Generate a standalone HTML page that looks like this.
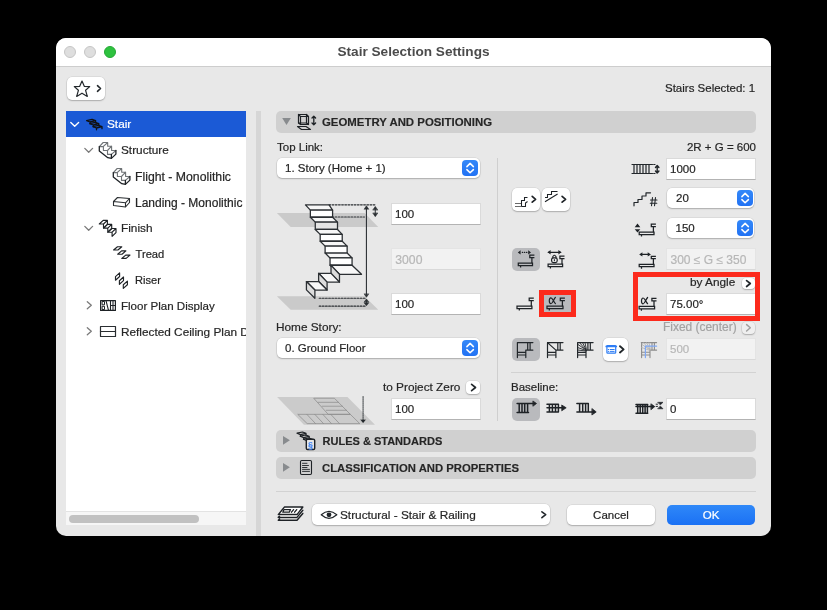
<!DOCTYPE html>
<html><head><meta charset="utf-8">
<style>
*{box-sizing:border-box;margin:0;padding:0}
html,body{width:827px;height:610px;background:#000;overflow:hidden;font-family:"Liberation Sans",sans-serif;font-size:11.5px;color:#262626}
.a{position:absolute}
#win{position:absolute;left:56px;top:38px;width:715px;height:498px;background:#e8e8e8;border-radius:10px;overflow:hidden}
#titlebar{position:absolute;left:56px;top:38px;width:715px;height:29px;background:#fff;border-radius:10px 10px 0 0;border-bottom:1px solid #cdcdcd}
.tl{position:absolute;top:46px;width:12px;height:12px;border-radius:50%;background:#dedede;border:1px solid #c6c6c6}
.t{position:absolute;white-space:nowrap;line-height:1;font-size:11.5px;margin-top:1px;-webkit-text-stroke-width:0.2px}
.tr{font-size:11.8px}
.input{position:absolute;background:#fff;border:1px solid #dadada;border-bottom-color:#b3b3b3;height:22px}
.dis{background:#f2f2f2;border-color:#e4e4e4;border-bottom-color:#d9d9d9}
.popup{position:absolute;background:#fff;border-radius:5px;height:20px;box-shadow:0 0 0 0.5px rgba(0,0,0,.10),0 1px 1.5px rgba(0,0,0,.22)}
.step{position:absolute;width:16px;height:16px;border-radius:4px;background:linear-gradient(#3488f8,#2172f4)}
.sec{position:absolute;left:276px;width:480px;height:22px;background:#d0d0d0;border-radius:5px}
.b{position:absolute;white-space:nowrap;line-height:1;font-size:11.3px;margin-top:1px;-webkit-text-stroke-width:0.15px;font-weight:bold;color:#262626}
.tog{position:absolute;width:28px;height:24px;border-radius:5px;background:#b9babd}
.btn{position:absolute;background:#fff;border-radius:5px;box-shadow:0 0 0 0.5px rgba(0,0,0,.10),0 1px 1.5px rgba(0,0,0,.22)}
.red{position:absolute;border:5px solid #fc2a1c}
.g{color:#a9a9a9}
</style></head><body>
<div id="root" style="position:absolute;left:0;top:0;width:827px;height:610px;will-change:transform">
<div id="win"></div>
<div id="titlebar"></div>
<div class="tl" style="left:64px"></div>
<div class="tl" style="left:84px"></div>
<div class="tl" style="left:104px;background:#2ec23f;border-color:#25a935"></div>
<div class="t" style="left:337.5px;top:44.2px;font-size:13.62px;font-weight:bold;color:#4b4b4b;-webkit-text-stroke-width:0">Stair Selection Settings</div>

<!-- favorites -->
<div class="btn" style="left:67px;top:77px;width:38px;height:23px"></div>
<div class="t" style="left:665px;top:82.3px">Stairs Selected: 1</div>

<!-- tree -->
<div class="a" style="left:66px;top:111px;width:180px;height:414px;background:#fff"></div>
<div class="a" style="left:66px;top:511px;width:180px;height:1px;background:#e3e3e3"></div>
<div class="a" style="left:66px;top:512px;width:180px;height:13px;background:#f6f6f6"></div>
<div class="a" style="left:69px;top:515px;width:130px;height:8px;border-radius:4px;background:#c1c1c1"></div>
<div class="a" style="left:66px;top:111px;width:180px;height:26px;background:#1b5ad6"></div>
<div class="t tr" style="left:107px;top:117.9px;color:#fff">Stair</div>
<div class="t tr" style="left:121px;top:143.9px">Structure</div>
<div class="t tr" style="left:135px;top:169.7px;font-size:12.25px">Flight - Monolithic</div>
<div class="t tr" style="left:135px;top:195.8px;font-size:12px">Landing - Monolithic</div>
<div class="t tr" style="left:121px;top:221.9px">Finish</div>
<div class="t tr" style="left:135.5px;top:248.3px;font-size:11.2px">Tread</div>
<div class="t tr" style="left:135px;top:274.3px;font-size:11.1px">Riser</div>
<div class="t tr" style="left:121px;top:300.1px;font-size:11.55px">Floor Plan Display</div>
<div class="a" style="left:121px;top:320px;width:125px;height:20px;overflow:hidden"><div class="t tr" style="left:0;top:5.9px">Reflected Ceiling Plan Display</div></div>

<!-- splitter -->
<div class="a" style="left:256px;top:111px;width:5px;height:425px;background:#d6d6d6"></div>

<!-- geometry section -->
<div class="sec" style="top:111px"></div>
<div class="b" style="left:322px;top:115.9px;font-size:11.42px">GEOMETRY AND POSITIONING</div>
<div class="t" style="left:277px;top:141.3px">Top Link:</div>
<div class="t" style="left:636px;top:141.4px;width:120px;text-align:right">2R + G = 600</div>
<div class="popup" style="left:277px;top:158px;width:203px"></div>
<div class="step" style="left:462px;top:160px"></div>
<div class="t" style="left:285px;top:162.3px">1. Story (Home + 1)</div>

<div class="input" style="left:391px;top:203px;width:90px"></div>
<div class="t" style="left:395px;top:208.3px">100</div>
<div class="input dis" style="left:391px;top:248px;width:90px"></div>
<div class="t g" style="left:395.3px;top:252.8px;color:#b7b7b7;font-size:12.2px">3000</div>
<div class="input" style="left:391px;top:293px;width:90px"></div>
<div class="t" style="left:395px;top:298.3px">100</div>

<div class="t" style="left:276px;top:321px;font-size:11.8px">Home Story:</div>
<div class="popup" style="left:277px;top:338px;width:203px"></div>
<div class="step" style="left:462px;top:340px"></div>
<div class="t" style="left:285px;top:342.1px">0. Ground Floor</div>

<div class="t" style="left:383px;top:380.8px;font-size:11.8px">to Project Zero</div>
<div class="btn" style="left:466px;top:381px;width:14px;height:13px;border-radius:4px"></div>
<div class="input" style="left:391px;top:398px;width:90px"></div>
<div class="t" style="left:395px;top:403.3px">100</div>

<div class="a" style="left:497px;top:158px;width:1px;height:263px;background:#cfcfcf"></div>

<!-- right column controls -->
<div class="input" style="left:666px;top:158px;width:90px"></div>
<div class="t" style="left:670px;top:163.3px">1000</div>
<div class="popup" style="left:667px;top:188px;width:87px"></div>
<div class="step" style="left:737px;top:190px"></div>
<div class="t" style="left:676px;top:192.3px">20</div>
<div class="popup" style="left:667px;top:218px;width:87px"></div>
<div class="step" style="left:737px;top:220px"></div>
<div class="t" style="left:675.5px;top:222.3px">150</div>
<div class="input dis" style="left:666px;top:248px;width:90px"></div>
<div class="t" style="left:670.5px;top:253px;color:#b7b7b7;font-size:12px">300 ≤ G ≤ 350</div>

<div class="t" style="left:690px;top:275.6px;font-size:11.8px">by Angle</div>
<div class="btn" style="left:742px;top:278px;width:13px;height:11px;border-radius:4px"></div>
<div class="input" style="left:666px;top:293px;width:90px"></div>
<div class="t" style="left:670px;top:298.3px">75.00°</div>
<div class="t" style="left:663px;top:321px;color:#a3a3a3;font-size:11.95px">Fixed (center)</div>
<div class="btn" style="left:742px;top:322px;width:13px;height:12px;border-radius:4px;background:#efefef"></div>
<div class="input dis" style="left:666px;top:338px;width:90px"></div>
<div class="t" style="left:670px;top:343.3px;color:#b7b7b7">500</div>

<div class="btn" style="left:512px;top:188px;width:28px;height:23px"></div>
<div class="btn" style="left:542px;top:188px;width:28px;height:23px"></div>
<div class="tog" style="left:512px;top:248px;width:28px;height:23px"></div>
<div class="tog" style="left:544px;top:295px;width:27px;height:17px;border-radius:0"></div>
<div class="tog" style="left:512px;top:338px;width:28px;height:23px"></div>
<div class="btn" style="left:603px;top:338px;width:25px;height:23px"></div>

<div class="a" style="left:511px;top:372px;width:245px;height:1px;background:#d2d2d2"></div>
<div class="t" style="left:511px;top:381.1px">Baseline:</div>
<div class="tog" style="left:512px;top:398px;width:28px;height:23px"></div>
<div class="input" style="left:666px;top:398px;width:90px"></div>
<div class="t" style="left:670px;top:403.3px">0</div>

<!-- red boxes -->
<div class="red" style="left:539px;top:290px;width:37px;height:27px"></div>
<div class="red" style="left:633px;top:272px;width:127px;height:49px"></div>

<!-- other sections -->
<div class="sec" style="top:430px"></div>
<div class="b" style="left:322.5px;top:435.2px;font-size:11.02px">RULES &amp; STANDARDS</div>
<div class="sec" style="top:457px"></div>
<div class="b" style="left:322px;top:462px">CLASSIFICATION AND PROPERTIES</div>
<div class="a" style="left:276px;top:491px;width:480px;height:1px;background:#d2d2d2"></div>

<!-- bottom bar -->
<div class="btn" style="left:312px;top:504px;width:238px;height:21px"></div>
<div class="t tr" style="left:340px;top:508.9px">Structural - Stair &amp; Railing</div>
<div class="btn" style="left:567px;top:505px;width:88px;height:20px"></div>
<div class="t" style="left:567px;top:508.5px;width:88px;text-align:center">Cancel</div>
<div class="a" style="left:667px;top:505px;width:88px;height:20px;border-radius:5px;background:linear-gradient(#2f88f8,#1b71f4)"></div>
<div class="t" style="left:667px;top:508.5px;width:88px;text-align:center;color:#fff">OK</div>

<!-- ICONS -->
<svg class="a" style="left:0;top:0" width="827" height="610" viewBox="0 0 827 610" fill="none" stroke="#22272b" stroke-linejoin="round" stroke-linecap="round">
 <!-- star -->
 <path d="M82 81 L84.4 86.4 L89.7 86.6 L85.6 90.3 L87.3 96.4 L82 93.2 L76.7 96.4 L78.4 90.3 L74.3 86.6 L79.6 86.4 Z" stroke-width="1.2"/>
 <path d="M97.5 85.7 L100.5 88.5 L97.5 91.3" stroke-width="1.6"/>
 <!-- tree chevrons -->
 <path d="M70.8 122.6 L74.7 126.3 L78.6 122.6" stroke="#fff" stroke-width="1.4"/>
 <path d="M84.8 148.4 L88.7 152.2 L92.6 148.4" stroke="#7a7a7a" stroke-width="1.3"/>
 <path d="M84.8 226.4 L88.7 230.2 L92.6 226.4" stroke="#7a7a7a" stroke-width="1.3"/>
 <path d="M87.3 301.8 L91.3 305.3 L87.3 308.8" stroke="#7a7a7a" stroke-width="1.3"/>
 <path d="M87.3 327.8 L91.3 331.3 L87.3 334.8" stroke="#7a7a7a" stroke-width="1.3"/>
 <!-- stair icon (selected) -->
 <g stroke="#111" stroke-width="1.3">
  <path d="M86.6 120.6 L92.1 119.4 L95.6 120.7 L90.1 122.0 Z M90.1 122.0 L90.1 123.8 M95.6 120.7 L95.6 122.7"/>
  <path d="M89.8 123.6 L95.3 122.4 L98.8 123.7 L93.3 125.0 Z M93.3 125.0 L93.3 126.8 M98.8 123.7 L98.8 125.7"/>
  <path d="M93.0 126.6 L98.5 125.4 L102.0 126.7 L96.5 128.0 Z M96.5 128.0 L96.5 129.8 M102.0 126.7 L102.0 128.7"/>
 </g>
 <!-- structure icon -->
 <path d="M99.3 146.6 L103.2 142.5 L107.7 142.5 L107.7 146.2 L111.6 146.2 L111.6 150.5 L115.9 150.5 L115.9 154.1 L111.4 158.4 L107.8 157.7 L99.3 151.1 Z" fill="#fff" stroke="none"/>
 <path d="M99.3 146.6 L103.2 142.5 L107.7 142.5 L107.7 146.2 L111.6 146.2 L111.6 150.5 L115.9 150.5 M99.3 146.6 L103.4 146.4 L103.4 150.5 L107.5 150.5 L107.5 154.4 L111.4 154.4 M103.4 146.4 L107.7 142.5 M107.5 150.5 L111.6 146.2 M111.4 154.4 L115.9 150.5" stroke="#6f7376" stroke-width="1.1"/>
 <path d="M99.3 146.6 L99.3 151.1 L107.8 157.7 L111.4 158.4 L115.9 154.1 L115.9 150.5 M111.4 154.4 L111.4 158.4" stroke="#1e2226" stroke-width="1.3"/>
 <path d="M113.3 172.6 L117.2 168.5 L121.7 168.5 L121.7 172.2 L125.6 172.2 L125.6 176.5 L129.9 176.5 L129.9 180.1 L125.4 184.4 L121.8 183.7 L113.3 177.1 Z" fill="#fff" stroke="none"/>
 <path d="M113.3 172.6 L117.2 168.5 L121.7 168.5 L121.7 172.2 L125.6 172.2 L125.6 176.5 L129.9 176.5 M113.3 172.6 L117.4 172.4 L117.4 176.5 L121.5 176.5 L121.5 180.4 L125.4 180.4 M117.4 172.4 L121.7 168.5 M121.5 176.5 L125.6 172.2 M125.4 180.4 L129.9 176.5" stroke="#6f7376" stroke-width="1.1"/>
 <path d="M113.3 172.6 L113.3 177.1 L121.8 183.7 L125.4 184.4 L129.9 180.1 L129.9 176.5 M125.4 180.4 L125.4 184.4" stroke="#1e2226" stroke-width="1.3"/>
 <!-- landing icon -->
 <path d="M113.5 201.5 L117.5 197.5 L129.5 198.5 L129.5 202.5 L125.5 207 L113.5 205.5 Z M113.5 201.5 L125.5 202.8 L129.5 198.5 M125.5 202.8 L125.5 207" stroke="#2a2e31" stroke-width="1.1"/>
 <!-- finish icon -->
 <g stroke="#1e2226" stroke-width="1.15">
  <path d="M99.3 224.0 L103.2 220.3 L107.4 220.3 L103.5 224.0 Z M103.5 224.0 L103.5 228.1 L107.4 224.4 L107.4 220.3"/>
  <path d="M103.6 228.1 L107.5 224.4 L111.7 224.4 L107.8 228.1 Z M107.8 228.1 L107.8 232.2 L111.7 228.5 L111.7 224.4"/>
  <path d="M107.9 232.2 L111.8 228.5 L116.0 228.5 L112.1 232.2 Z M112.1 232.2 L112.1 236.3 L116.0 232.6 L116.0 228.5"/>
 </g>
 <!-- tread icon -->
 <g stroke="#1e2226" stroke-width="1.15">
  <path d="M113.6 250.0 L117.5 246.7 L121.8 246.7 L117.9 250.0 Z"/>
  <path d="M117.7 254.2 L121.6 250.9 L125.9 250.9 L122.0 254.2 Z"/>
  <path d="M121.8 258.4 L125.7 255.1 L130.0 255.1 L126.1 258.4 Z"/>
 </g>
 <!-- riser icon -->
 <g stroke="#1e2226" stroke-width="1.15">
  <path d="M115.5 280.2 L115.5 276.6 L119.6 272.9 L119.6 276.5 Z"/>
  <path d="M119.4 284.3 L119.4 280.7 L123.5 277.0 L123.5 280.6 Z"/>
  <path d="M123.3 288.4 L123.3 284.8 L127.4 281.1 L127.4 284.7 Z"/>
 </g>
 <!-- floor plan icon -->
 <g stroke="#1e2226" stroke-width="1.2">
  <rect x="100.6" y="300.6" width="14.8" height="9.8"/>
  <path d="M102.5 301.5 L104.5 301.5 L104.5 304.8 L102.5 304.8 Z M102.5 306.3 L104.5 306.3 L104.5 309.5 L102.5 309.5 Z" stroke-width="1"/>
  <path d="M106 300.6 L108.5 310.4 M110.5 300.6 L110.5 310.4 M113 300.6 L113 310.4 M110.5 305.5 L115.4 305.5" stroke-width="1.1"/>
 </g>
 <!-- rcp icon -->
 <g stroke="#2a2e31" stroke-width="1.2">
  <rect x="100.5" y="326.5" width="15" height="10"/>
  <path d="M100.5 331.5 L115.5 331.5"/>
 </g>

 <!-- section triangles -->
 <path d="M282.2 118.1 L290.9 118.1 L286.5 124.9 Z" fill="#888b8e" stroke="none"/>
 <path d="M283 436 L283 444.7 L289.9 440.3 Z" fill="#888b8e" stroke="none"/>
 <path d="M283 463 L283 471.7 L289.9 467.3 Z" fill="#888b8e" stroke="none"/>
 <!-- geometry icon -->
 <g stroke="#1e2226" stroke-width="1.2">
  <rect x="298.5" y="114.5" width="8" height="8.5"/>
  <path d="M298.5 114.5 L300.5 116.5 L308.5 116.5 L308.5 124.5 L300.5 124.5 L300.5 116.5 M306.5 114.5 L308.5 116.5 M306.5 123 L308.5 124.5 M298.5 123 L300.5 124.5"/>
  <path d="M297.5 126.5 L306 126.5 L310.5 129.5 L301.5 129.5 Z"/>
  <path d="M313.8 116.5 L313.8 124.5 M312 118 L313.8 116.2 L315.6 118 M312 123 L313.8 124.8 L315.6 123" stroke-width="1.3"/>
 </g>
 <!-- rules icon -->
 <g stroke="#1e2226" stroke-width="1.2">
  <path d="M297.0 433.2 L302.5 432.0 L306.0 433.3 L300.5 434.6 Z M300.5 434.6 L300.5 436.4 M306.0 433.3 L306.0 435.3"/>
  <path d="M300.2 436.2 L305.7 435.0 L309.2 436.3 L303.7 437.6 Z M303.7 437.6 L303.7 439.4 M309.2 436.3 L309.2 438.3"/>
  <path d="M303.4 439.2 L308.9 438.0 L312.4 439.3 L306.9 440.6 Z M306.9 440.6 L306.9 442.4 M312.4 439.3 L312.4 441.3"/>
 </g>
  <rect x="306.3" y="439.3" width="8.4" height="10.2" rx="1.3" fill="#e6e6e6" stroke="#1e2226" stroke-width="1.4"/>
  <text x="310.5" y="447.8" font-size="9" font-weight="bold" font-family="Liberation Sans" fill="#3a80f6" stroke="none" text-anchor="middle">§</text>
 <!-- classification icon -->
 <g stroke="#1e2226" stroke-width="1.1">
  <rect x="300.5" y="460.5" width="11" height="14" rx="1.2"/>
  <path d="M302.5 463.3 L307 463.3 M302.5 465.5 L308.5 465.5 M302.5 467.5 L307 467.5 M302.5 469.4 L309.5 469.4 M302.5 471.4 L309.5 471.4" stroke-width="0.9"/>
 </g>

 <!-- popup steppers -->
 <g stroke="#fff" stroke-width="1.5">
  <path d="M466.9 166.6 L470.1 163.4 L473.4 166.6 M466.9 169.6 L470.1 172.8 L473.4 169.6"/>
  <path d="M466.9 346.6 L470.1 343.4 L473.4 346.6 M466.9 349.6 L470.1 352.8 L473.4 349.6"/>
  <path d="M741.9 196.6 L745.1 193.4 L748.4 196.6 M741.9 199.6 L745.1 202.8 L748.4 199.6"/>
  <path d="M741.9 226.6 L745.1 223.4 L748.4 226.6 M741.9 229.6 L745.1 232.8 L748.4 229.6"/>
 </g>
 <!-- small chevron buttons -->
 <path d="M471.6 384.4 L475.5 387.5 L471.6 390.7" stroke-width="1.7"/>
 <path d="M746.6 280.6 L750.3 283.5 L746.6 286.5" stroke-width="1.7"/>
 <path d="M746.6 324.6 L750.3 327.8 L746.6 331" stroke="#a0a0a0" stroke-width="1.5"/>
 <path d="M541.9 511.8 L545.7 514.6 L541.9 517.7" stroke-width="1.6"/>
 <!-- eye icon -->
 <path d="M321.2 514.8 Q329 507.8 336.8 514.8 Q329 521.8 321.2 514.8 Z" stroke-width="1.15"/>
 <circle cx="329" cy="514.8" r="2.4" fill="#22272b" stroke="none"/>
 <!-- layers icon -->
 <g stroke="#1e2226" stroke-width="1.5">
  <path d="M278.3 514.6 L297 514.6 L302.8 507.1 L302.8 513.4 L297 520.3 L278.3 520.3 Z" fill="#fff" stroke="none"/>
  <path d="M278.3 520.3 L297 520.3 L302.8 513.4 M278.3 517.4 L297 517.4 L302.8 510.3 M279.5 516.2 L278.3 517.4 M279.5 519.1 L278.3 520.3"/>
  <path d="M284.4 507.1 L302.8 507.1 L297 514.6 L278.3 514.6 Z" fill="#fff"/>
  <path d="M284 509.6 L290.5 509.6 L289.3 512.2 L282.8 512.2 Z M291.5 512.2 L293.6 509.6 M294.6 512.2 L296.7 509.6" stroke-width="1.3"/>
 </g>

 <!-- right icons: width -->
 <g stroke="#22272b" stroke-width="1.2">
  <path d="M632 164.5 L651 164.5 M632 173.5 L651 173.5 M634 164.5 L634 173.5 M637 164.5 L637 173.5 M640 164.5 L640 173.5 M643 164.5 L643 173.5 M646 164.5 L646 173.5 M649 164.5 L649 173.5"/>
  <path d="M651 164.5 L655 164.5 M651 173.5 L655 173.5" stroke-dasharray="1.5 1.2"/>
  <path d="M657.2 166 L657.2 172.5 M655.5 167.5 L657.2 165.5 L658.9 167.5 M655.5 171 L657.2 173 L658.9 171" stroke-width="1.4"/>
 </g>
 <!-- riser count -->
 <g stroke="#22272b" stroke-width="1.2">
  <path d="M634 205.8 L634 202.5 L638 202.5 L638 199.5 L642 199.5 L642 196 L646 196 L646 192.8 L650.5 192.8"/>
  <path d="M652.5 197.5 L651.5 205.8 M655.5 197.5 L654.5 205.8 M650.5 200 L657 200 M650.3 203.3 L656.8 203.3" stroke-width="1.1"/>
 </g>
 <!-- riser height -->
 <path d="M634.7 227.2 L637.5 223.6 L640.3 227.2 Z M634.7 229.2 L640.3 229.2 L637.5 232.6 Z" fill="#1e2226" stroke="none"/>
  <path d="M639.2 232.2 L654.0 232.2 L654.0 234.6 L639.2 234.6 Z M641.5 234.6 L641.5 236.6 M653.4 232.2 L653.4 226.2 M655.9 226.6 L651.3 226.6 L651.3 224.2 L655.9 224.2" stroke="#1e2226" stroke-width="1.25" stroke-linejoin="miter" stroke-linecap="butt"/>
 <!-- going -->
 <path d="M641 254.4 L649 254.4" stroke="#1e2226" stroke-width="1.3"/>
 <path d="M639.2 254.4 L642.4 252.2 L642.4 256.6 Z M650.9 254.4 L647.7 252.2 L647.7 256.6 Z" fill="#1e2226" stroke="none"/>
  <path d="M639.2 264.3 L654.0 264.3 L654.0 266.7 L639.2 266.7 Z M641.5 266.7 L641.5 268.7 M653.4 264.3 L653.4 258.3 M655.9 258.7 L651.3 258.7 L651.3 256.3 L655.9 256.3" stroke="#1e2226" stroke-width="1.25" stroke-linejoin="miter" stroke-linecap="butt"/>
 <!-- angle icon -->
  <path d="M639.1 306.4 L654.6 306.4 L654.6 308.8 L639.1 308.8 Z M641.4 308.8 L641.4 310.8 M654.0 306.4 L654.0 300.4 M656.5 300.8 L651.9 300.8 L651.9 298.4 L656.5 298.4" stroke="#1e2226" stroke-width="1.25" stroke-linejoin="miter" stroke-linecap="butt"/>
  <path transform="translate(641 297.3) scale(1.0)" d="M6.6 0.2 C4.6 2.6 3.8 6.5 2.1 6.5 C0 6.5 -0.1 0.7 2.1 0.7 C3.8 0.7 4.6 4.5 6.6 6.4" stroke="#1e2226" stroke-width="1.2" fill="none"/>
 <!-- stair-mode buttons -->
 <g stroke="#1e2226" stroke-width="1.05" stroke-linecap="butt" stroke-linejoin="miter">
  <path d="M515 203.5 L521.5 203.5 M515 206.5 L521.5 206.5" stroke="#6a6a6a"/>
  <path d="M521.5 206.5 L521.5 200.5 L524.5 200.5 L524.5 197.5 L527.5 197.5 M521.5 206.5 L525.5 206.5 L525.5 203 L527.5 201.5"/>
  <path d="M532.2 196.3 L535.6 199.3 L532.2 202.2" stroke-width="1.7" stroke-linecap="round" stroke-linejoin="round"/>
  <path d="M545 197.5 L547.5 197.5 L547.5 194.5 L551.5 194.5 L551.5 191.5 L557.5 191.5 M545 201.8 L557.6 194"/>
  <path d="M562.1 196.3 L565.6 199.3 L562.1 202.2" stroke-width="1.7" stroke-linecap="round" stroke-linejoin="round"/>
 </g>
 <!-- tread toggles -->
 <g stroke="#1e2226" stroke-width="1.2">
  <path d="M517.8 252.4 L520.6 250.2 L520.6 254.6 Z M531 252.4 L528.2 250.2 L528.2 254.6 Z" fill="#1e2226" stroke="none"/>
  <path d="M522.3 252.4 L522.7 252.4 M524.4 252.4 L524.8 252.4 M526.5 252.4 L526.9 252.4" stroke-width="1.1"/>
  <path d="M548.3 252.3 L560.7 252.3" stroke-width="1.3"/>
  <path d="M547.6 252.3 L550.6 250 L550.6 254.6 Z M561.4 252.3 L558.4 250 L558.4 254.6 Z" fill="#1e2226" stroke="none"/>
  <rect x="551.6" y="257.8" width="5.6" height="4.8" rx="1.8"/>
  <path d="M552.8 258 L552.8 256.6 Q554.4 253.9 556 256.6 L556 258" stroke-width="1.1"/>
  <path d="M554.4 259.6 L554.4 260.8" stroke-width="1"/>
 </g>
  <path d="M518.3 263.1 L532.5 263.1 L532.5 265.5 L518.3 265.5 Z M520.6 265.5 L520.6 267.5 M531.9 263.1 L531.9 257.1 M534.4 257.5 L529.8 257.5 L529.8 255.1 L534.4 255.1" stroke="#1e2226" stroke-width="1.25" stroke-linejoin="miter" stroke-linecap="butt"/>
  <path d="M548.1 264.2 L562.6 264.2 L562.6 266.6 L548.1 266.6 Z M550.4 266.6 L550.4 268.6 M562.0 264.2 L562.0 258.2 M564.5 258.6 L559.9 258.6 L559.9 256.2 L564.5 256.2" stroke="#1e2226" stroke-width="1.25" stroke-linejoin="miter" stroke-linecap="butt"/>
  <path d="M517 306.2 L531.9 306.2 L531.9 308.6 L517 308.6 Z M519.3 308.6 L519.3 310.6 M531.3 306.2 L531.3 300.2 M533.8 300.6 L529.2 300.6 L529.2 298.2 L533.8 298.2" stroke="#1e2226" stroke-width="1.25" stroke-linejoin="miter" stroke-linecap="butt"/>
  <path d="M547 306.1 L563.0 306.1 L563.0 308.5 L547 308.5 Z M549.3 308.5 L549.3 310.5 M562.4 306.1 L562.4 300.1 M564.9 300.5 L560.3 300.5 L560.3 298.1 L564.9 298.1" stroke="#1e2226" stroke-width="1.25" stroke-linejoin="miter" stroke-linecap="butt"/>
  <path transform="translate(548.8 297.2) scale(1.0)" d="M6.6 0.2 C4.6 2.6 3.8 6.5 2.1 6.5 C0 6.5 -0.1 0.7 2.1 0.7 C3.8 0.7 4.6 4.5 6.6 6.4" stroke="#1e2226" stroke-width="1.2" fill="none"/>
 <!-- landing type icons -->
 <g stroke="#22272b" stroke-width="1.2">
  <path d="M517.4 342.6 L532.9 342.6 M517.4 342.6 L517.4 357.6 M525.8 357.6 L525.8 350.1 L532.9 350.1 M527.7 342.6 L527.7 350.1 M530.1 342.6 L530.1 350.1 M517.4 352.3 L525.8 352.3 M517.4 355 L525.8 355"/>
  <path d="M547.5 342.6 L563 342.6 M547.5 342.6 L547.5 357.6 M555.9 357.6 L555.9 350.1 L563 350.1 M557.8 342.6 L557.8 350.1 M560.2 342.6 L560.2 350.1 M547.5 352.3 L555.9 352.3 M547.5 355 L555.9 355 M547.5 342.6 L555.9 350.1"/>
  <path d="M577.6 342.6 L593.1 342.6 M577.6 342.6 L577.6 357.6 M586 357.6 L586 350.1 L593.1 350.1 M587.9 342.6 L587.9 350.1 M590.3 342.6 L590.3 350.1 M577.6 352.3 L586 352.3 M577.6 355 L586 355"/>
  <path d="M578 344.5 L586 350 M579.5 342.6 L586 350 M582.5 342.6 L586 349.5 M585 342.6 L586.3 349 M577.6 347.5 L586 350.5 M577.6 350 L586 351" stroke-width="0.9"/>
  <path d="M620 346.2 L623.6 349.4 L620 352.5" stroke-width="1.9"/>
 </g>
 <rect x="606.9" y="345.6" width="8.8" height="7.6" rx="0.8" stroke="#2d7df5" stroke-width="1.2"/>
 <path d="M606.3 346.4 L616.2 346.4" stroke="#2d7df5" stroke-width="1.8"/>
 <path d="M608.2 349.5 L608.7 349.5 M610.2 349.5 L614.2 349.5 M608.2 351.4 L608.7 351.4 M610.2 351.4 L614.2 351.4" stroke="#2d7df5" stroke-width="1"/>
 <g stroke="#8c8c8c" stroke-width="1.1">
  <path d="M641.3 342.6 L656.6 342.6 M641.6 342.6 L641.6 357.6 M650 357.6 L650 350.1 L656.6 350.1 M652 342.6 L652 350.1 M654.4 342.6 L654.4 350.1 M641.6 352.3 L650 352.3 M641.6 355 L650 355"/>
  <path d="M642 344.5 L650 350 M643.5 342.6 L650 350 M646.5 342.6 L650 349.5 M649 342.6 L650.3 349 M641.6 347.5 L650 350.5" stroke-width="0.8" stroke="#b0b0b0"/>
 </g>
 <path d="M645.4 357.6 L645.4 346.2 L656.6 346.2" stroke="#7ea8f5" stroke-width="1.2"/>

 <!-- baseline icons -->
 <g stroke="#1e2226" stroke-width="1.5">
  <path d="M517.1 403.5 L533.5 403.5 M517.1 412.4 L528.5 412.4 M519.2 403.5 L519.2 412.4 M522 403.5 L522 412.4 M524.7 403.5 L524.7 412.4 M527.6 403.5 L527.6 412.4"/>
  <path d="M533.2 401.2 L536.5 403.5 L533.2 406 Z" fill="#1e2226" stroke-width="0.8"/>
  <path d="M547 404.2 L558.4 404.2 M547 407.8 L562.5 407.8 M547 411.9 L558.4 411.9 M549.4 404.2 L549.4 411.9 M552.4 404.2 L552.4 411.9 M555.5 404.2 L555.5 411.9 M558.4 404.2 L558.4 411.9"/>
  <path d="M562 405.2 L566.2 407.8 L562 410.6 Z" fill="#1e2226" stroke-width="0.8"/>
  <path d="M576.9 403.5 L588.3 403.5 M576.9 411.9 L592.5 411.9 M579.6 403.5 L579.6 411.9 M582.7 403.5 L582.7 411.9 M585.6 403.5 L585.6 411.9 M588.3 403.5 L588.3 411.9"/>
  <path d="M592.2 408.8 L596.2 411.9 L592.2 414.8 Z" fill="#1e2226" stroke-width="0.8"/>
  <path d="M636 404.4 L647.7 404.4 M636 406.6 L651.5 406.6 M636 413.2 L647.7 413.2 M637.7 404.4 L637.7 413.2 M640.2 404.4 L640.2 413.2 M642.7 404.4 L642.7 413.2 M645.1 404.4 L645.1 413.2 M647.4 404.4 L647.4 413.2"/>
  <path d="M651.2 404 L654.8 406.6 L651.2 409.5 Z" fill="#1e2226" stroke-width="0.8"/>
  <path d="M658 402.3 L663 402.3 L660.5 404.7 Z M658 408.8 L663 408.8 L660.5 406.2 Z" fill="#1e2226" stroke-width="0.6"/>
  <path d="M656.1 404.2 L657.5 404.2 M656.1 406.4 L657.5 406.4" stroke-width="1"/>
 </g>

 <!-- stair diagram -->
 <svg x="272" y="196" width="120" height="120" viewBox="0 0 610 610">
  <path d="M25 87 L470 87 L540 157 L95 157 Z" fill="#cacaca" stroke="none"/>
  <path d="M25 510 L470 510 L540 578 L95 578 Z" fill="#cacaca" stroke="none"/>
  <g stroke="#2b2f33" stroke-width="6.5" stroke-linejoin="round">
   <path d="M170 45 L290 45 L308 72 L195 72 Z" fill="#f7f7f7"/>
   <path d="M195 72 L308 72 L308 108 L195 108 Z" fill="#fff"/>
   <path d="M195 108 L308 108 L333 133 L220 133 Z" fill="#f7f7f7"/>
   <path d="M220 133 L333 133 L333 170 L220 170 Z" fill="#e4e4e4"/>
   <path d="M220 170 L333 170 L357 195 L245 195 Z" fill="#f7f7f7"/>
   <path d="M245 195 L357 195 L357 230 L245 230 Z" fill="#fff"/>
   <path d="M245 230 L357 230 L382 255 L270 255 Z" fill="#f7f7f7"/>
   <path d="M270 255 L382 255 L382 290 L270 290 Z" fill="#fff"/>
   <path d="M270 290 L382 290 L407 315 L295 315 Z" fill="#f7f7f7"/>
   <path d="M295 315 L407 315 L407 352 L295 352 Z" fill="#fff"/>
   <path d="M295 352 L407 352 L455 398 L343 398 Z" fill="#f7f7f7"/>
   <path d="M300 352 L343 398 L343 438 L300 395 Z" fill="#dcdcdc"/>
   <path d="M237 393 L300 393 L343 438 L280 438 Z" fill="#f7f7f7"/>
   <path d="M237 393 L280 438 L280 478 L237 435 Z" fill="#dcdcdc"/>
   <path d="M175 435 L237 435 L280 478 L218 478 Z" fill="#f7f7f7"/>
   <path d="M175 435 L218 478 L218 520 L175 477 Z" fill="#dcdcdc"/>
  </g>
  <g stroke="#2b2f33" stroke-width="5.5" fill="none">
   <path d="M290 45 L525 45 M305 107 L470 107 M240 520 L480 520 M240 560 L480 560" stroke-dasharray="9 7"/>
   <path d="M480 60 L480 505"/>
   <path d="M469 66 L480 50 L491 66 Z M469 499 L480 515 L491 499 Z" fill="#2b2f33" stroke-width="3"/>
   <path d="M525 62 L525 96" stroke-width="5"/>
   <path d="M513 70 L525 53 L537 70 Z M513 88 L525 105 L537 88 Z" fill="#2b2f33" stroke-width="3"/>
   <path d="M480 532 L480 550" stroke-width="5"/>
   <path d="M469 538 L480 524 L491 538 Z M469 544 L480 558 L491 544 Z" fill="#2b2f33" stroke-width="3"/>
  </g>
 </svg>
 <!-- project zero diagram -->
 <svg x="272" y="390" width="120" height="40" viewBox="0 0 827 276">
  <path d="M35 48 L520 48 L710 240 L220 240 Z" fill="#cbcbcb" stroke="none"/>
  <g stroke="#8a8a8a" stroke-width="5" fill="none">
   <path d="M290 57 L430 57 L540 168 L390 168 Z M318 85 L458 85 M346 112 L486 112 M374 140 L514 140"/>
   <path d="M180 168 L540 168 L605 232 L245 232 Z M240 168 L300 232 M295 168 L355 232 M350 168 L410 232 M405 168 L465 232"/>
  </g>
  <path d="M628 45 L628 205" stroke="#22272b" stroke-width="6" stroke-dasharray="8 6"/>
  <path d="M610 205 L628 228 L646 205 Z" fill="#22272b"/>
 </svg>
</svg>
</div>
</body></html>
